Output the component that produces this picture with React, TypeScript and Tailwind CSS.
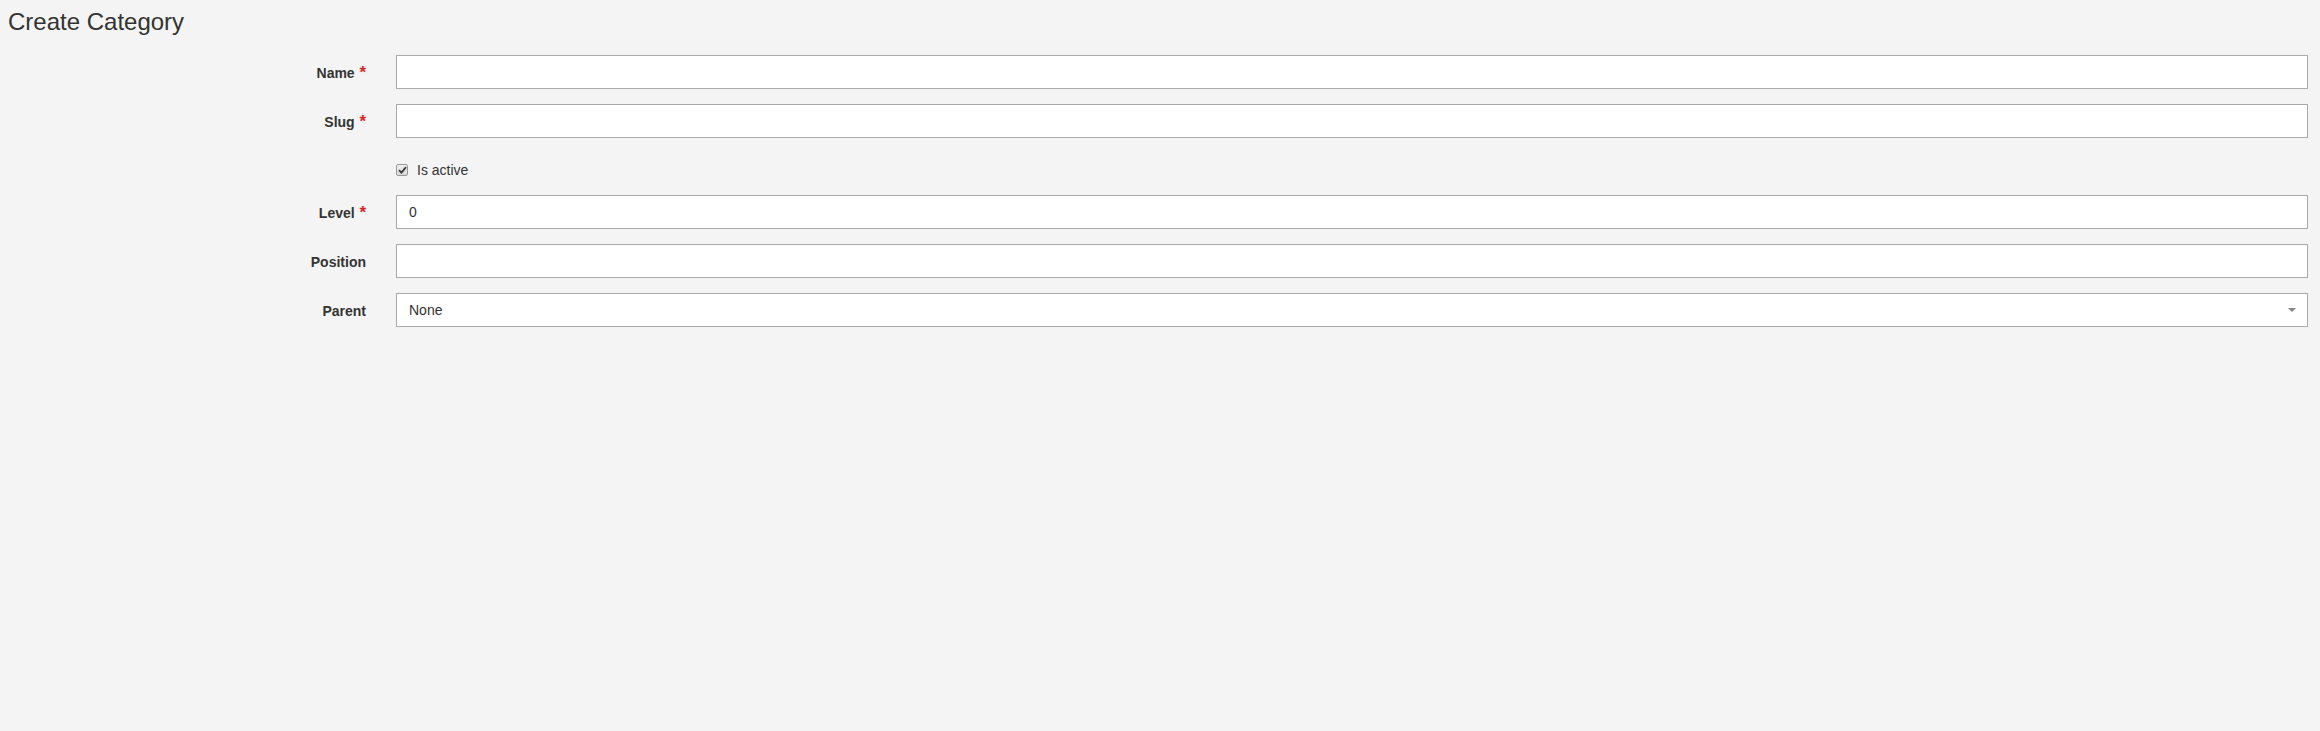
import React from "react";

function Label({ text, required }: { text: string; required?: boolean }) {
  return (
    <label className="w-[366px] shrink-0 pt-2 text-right text-[14px] leading-5 font-bold text-[#333]">
      {text}
      {required && <span className="text-[17px] leading-none text-[#dd2222]"> *</span>}
    </label>
  );
}

function TextField({ value }: { value?: string }) {
  return (
    <input
      type="text"
      defaultValue={value}
      className="ml-[30px] h-[34px] flex-1 border border-[#aaaaaa] bg-white px-3 text-[14px] text-[#333] outline-none"
    />
  );
}

export default function App() {
  return (
    <div className="min-h-screen bg-[#f4f4f4] font-['Liberation_Sans',Arial,sans-serif] text-[#333]">
      <h1 className="pl-2 pt-[9px] text-[24px] leading-[26px] font-normal">Create Category</h1>

      <form className="mt-5 flex flex-col pr-3">
        <div className="mb-[15px] flex">
          <Label text="Name" required />
          <TextField />
        </div>

        <div className="mb-[15px] flex">
          <Label text="Slug" required />
          <TextField />
        </div>

        {/* Is active */}
        <div className="mb-[15px] flex pt-[7px]">
          <div className="w-[366px] shrink-0" />
          <label className="ml-[30px] flex items-center text-[14px] leading-5">
            <span className="mr-[9px] flex h-[12px] w-[12px] items-center justify-center rounded-[2px] border border-[#9a9a9a] bg-gradient-to-b from-[#f0f0f0] to-[#d8d8d8]">
              <svg width="9" height="8" viewBox="0 0 9 8">
                <path d="M1 4.2 L3.4 6.6 L8 1.2" fill="none" stroke="#3a3a3a" strokeWidth="1.8" />
              </svg>
            </span>
            Is active
          </label>
        </div>

        <div className="mb-[15px] flex">
          <Label text="Level" required />
          <TextField value="0" />
        </div>

        <div className="mb-[15px] flex">
          <Label text="Position" />
          <TextField />
        </div>

        <div className="mb-[15px] flex">
          <Label text="Parent" />
          <div className="relative ml-[30px] flex-1">
            <select className="h-[34px] w-full appearance-none rounded-none border border-[#aaaaaa] bg-white px-3 text-[14px] text-[#333] outline-none">
              <option>None</option>
            </select>
            <svg
              className="pointer-events-none absolute right-[12px] top-[15px]"
              width="8"
              height="4"
              viewBox="0 0 8 4"
            >
              <path d="M0 0 L8 0 L4 4 Z" fill="#888888" />
            </svg>
          </div>
        </div>
      </form>
    </div>
  );
}
